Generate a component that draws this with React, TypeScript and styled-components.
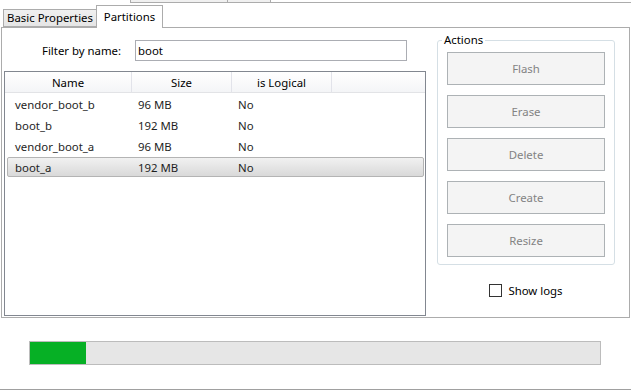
import React from 'react';
import styled, { createGlobalStyle } from 'styled-components';

const GlobalStyle = createGlobalStyle`
  html, body {
    margin: 0;
    padding: 0;
    background: #ffffff;
  }
  body {
    font-family: "Segoe UI", "Noto Sans", sans-serif;
    font-size: 11.4px;
    color: #1b1b1b;
  }
`;

type Partition = { name: string; size: string; logical: string };

const partitions: Partition[] = [
  { name: 'vendor_boot_b', size: '96 MB', logical: 'No' },
  { name: 'boot_b', size: '192 MB', logical: 'No' },
  { name: 'vendor_boot_a', size: '96 MB', logical: 'No' },
  { name: 'boot_a', size: '192 MB', logical: 'No' },
];

const actions = ['Flash', 'Erase', 'Delete', 'Create', 'Resize'];

// colonnes de la liste : largeur + retrait du texte
const columns = [
  { title: 'Name', width: 127, pad: 9 },
  { title: 'Size', width: 100, pad: 5 },
  { title: 'is Logical', width: 100, pad: 5 },
];

const Window = styled.div`
  width: 631px;
  height: 391px;
  display: flex;
  flex-direction: column;
  overflow: hidden;
  background: #fff;
`;

// bord du TabControl parent, coupé en haut de l'image
const OuterStrip = styled.div`
  height: 3px;
  display: flex;
  padding-left: 130px;
`;

const StubTab = styled.div<{ $w: number }>`
  width: ${p => p.$w}px;
  height: 3px;
  box-sizing: border-box;
  background: #f0f0f0;
  border: 1px solid #acacac;
  border-top: none;
  & + & {
    margin-left: -1px;
  }
`;

const StripLine = styled.div`
  flex: 1;
  height: 3px;
  box-sizing: border-box;
  border-bottom: 1px solid #acacac;
`;

const OuterBody = styled.div`
  height: 387px;
  box-sizing: border-box;
  border-bottom: 1px solid #a0a0a0;
  padding: 2px 0 0 1px;
  display: flex;
  flex-direction: column;
`;

const TabHeader = styled.div`
  height: 22px;
  display: flex;
  align-items: flex-end;
  padding-left: 2px;
  position: relative;
  z-index: 1;
`;

const Tab = styled.div<{ $active?: boolean; $w: number }>`
  box-sizing: border-box;
  width: ${p => p.$w}px;
  height: ${p => (p.$active ? 23 : 18)}px;
  margin-bottom: ${p => (p.$active ? -1 : 0)}px;
  padding-bottom: ${p => (p.$active ? 2 : 1)}px;
  display: flex;
  align-items: center;
  justify-content: center;
  border: 1px solid #acacac;
  border-bottom: ${p => (p.$active ? 'none' : '1px solid #acacac')};
  background: ${p => (p.$active ? '#ffffff' : 'linear-gradient(#f0f0f0, #e5e5e5)')};
  color: #000;
  white-space: nowrap;
  & + & {
    margin-left: -1px;
  }
`;

const Panel = styled.div`
  width: 629px;
  height: 291px;
  box-sizing: border-box;
  border: 1px solid #acacac;
  display: flex;
  padding: 0 0 0 2px;
`;

const LeftColumn = styled.div`
  width: 422px;
  display: flex;
  flex-direction: column;
`;

const FilterRow = styled.div`
  margin-top: 12px;
  height: 21px;
  display: flex;
  align-items: center;
`;

const FilterLabel = styled.span`
  margin-left: 38px;
  width: 93px;
  color: #000;
`;

const FilterInput = styled.input`
  width: 272px;
  height: 21px;
  box-sizing: border-box;
  border: 1px solid #abadb3;
  padding: 0 2px;
  margin: 0;
  font: inherit;
  color: #000;
  outline: none;
`;

const List = styled.div`
  margin-top: 10px;
  height: 245px;
  box-sizing: border-box;
  border: 1px solid #828790;
  background: #fff;
`;

const HeaderRow = styled.div`
  height: 21px;
  box-sizing: border-box;
  display: flex;
  background: linear-gradient(#ffffff, #f4f5f7);
  border-bottom: 1px solid #e2e3e6;
`;

const HeaderCell = styled.div<{ $w?: number }>`
  ${p => (p.$w ? `width: ${p.$w}px;` : 'flex: 1;')}
  box-sizing: border-box;
  border-right: ${p => (p.$w ? '1px solid #e2e3ea' : 'none')};
  display: flex;
  align-items: center;
  justify-content: center;
  color: #000;
`;

const Row = styled.div<{ $selected?: boolean }>`
  height: 20px;
  margin: 1px 1px 0 2px;
  box-sizing: border-box;
  display: flex;
  align-items: center;
  border: 1px solid ${p => (p.$selected ? '#b4b4b4' : 'transparent')};
  border-radius: 2px;
  background: ${p => (p.$selected ? 'linear-gradient(#f1f1f1, #d9d9d9)' : 'transparent')};
`;

const Cell = styled.div<{ $w: number; $pad: number }>`
  width: ${p => p.$w}px;
  padding-left: ${p => p.$pad}px;
  box-sizing: border-box;
  white-space: nowrap;
  color: #1e1e1e;
`;

const RightColumn = styled.div`
  margin-left: 11px;
  width: 178px;
  display: flex;
  flex-direction: column;
`;

const GroupBox = styled.fieldset`
  margin: 4px 0 0 0;
  padding: 0 9px 7px 9px;
  border: 1px solid #d5dfe5;
  border-radius: 3px;
  min-width: 0;
`;

const GroupTitle = styled.legend`
  margin-left: -5px;
  padding: 0 2px;
  line-height: 16px;
  color: #000;
`;

const ButtonStack = styled.div`
  margin-top: 4px;
  display: flex;
  flex-direction: column;
  gap: 10px;
`;

const ActionButton = styled.button`
  height: 33px;
  width: 158px;
  box-sizing: border-box;
  margin: 0;
  padding: 0;
  border: 1px solid #adb2b5;
  background: #f4f4f4;
  color: #838383;
  font: inherit;
`;

const CheckRow = styled.label`
  margin-top: 17px;
  height: 16px;
  display: flex;
  align-items: center;
  justify-content: center;
  gap: 6px;
  color: #000;
`;

const CheckBox = styled.span`
  width: 13px;
  height: 13px;
  box-sizing: border-box;
  border: 1px solid #333333;
  background: #fff;
`;

const ProgressTrack = styled.div`
  margin: 23px 0 0 28px;
  width: 572px;
  height: 24px;
  box-sizing: border-box;
  border: 1px solid #bcbcbc;
  background: #e6e6e6;
  display: flex;
`;

const ProgressFill = styled.div`
  height: 100%;
  background: #06b025;
`;

export default function App() {
  const progress = 9.8;
  return (
    <Window>
      <GlobalStyle />
      <OuterStrip>
        <StubTab $w={98} />
        <StubTab $w={44} />
        <StripLine />
      </OuterStrip>
      <OuterBody>
        <TabHeader>
          <Tab $w={94}>Basic Properties</Tab>
          <Tab $w={67} $active>Partitions</Tab>
        </TabHeader>
        <Panel>
          <LeftColumn>
            <FilterRow>
              <FilterLabel>Filter by name:</FilterLabel>
              <FilterInput defaultValue="boot" readOnly />
            </FilterRow>
            <List>
              <HeaderRow>
                {columns.map(c => (
                  <HeaderCell key={c.title} $w={c.width}>{c.title}</HeaderCell>
                ))}
                <HeaderCell />
              </HeaderRow>
              {partitions.map((p, i) => (
                <Row key={p.name} $selected={i === partitions.length - 1}>
                  <Cell $w={columns[0].width - 2} $pad={columns[0].pad - 2}>{p.name}</Cell>
                  <Cell $w={columns[1].width} $pad={columns[1].pad}>{p.size}</Cell>
                  <Cell $w={columns[2].width} $pad={columns[2].pad}>{p.logical}</Cell>
                </Row>
              ))}
            </List>
          </LeftColumn>
          <RightColumn>
            <GroupBox>
              <GroupTitle>Actions</GroupTitle>
              <ButtonStack>
                {actions.map(a => (
                  <ActionButton key={a} disabled>{a}</ActionButton>
                ))}
              </ButtonStack>
            </GroupBox>
            <CheckRow>
              <CheckBox />
              Show logs
            </CheckRow>
          </RightColumn>
        </Panel>
        <ProgressTrack>
          <ProgressFill style={{ width: `${progress}%` }} />
        </ProgressTrack>
      </OuterBody>
    </Window>
  );
}
